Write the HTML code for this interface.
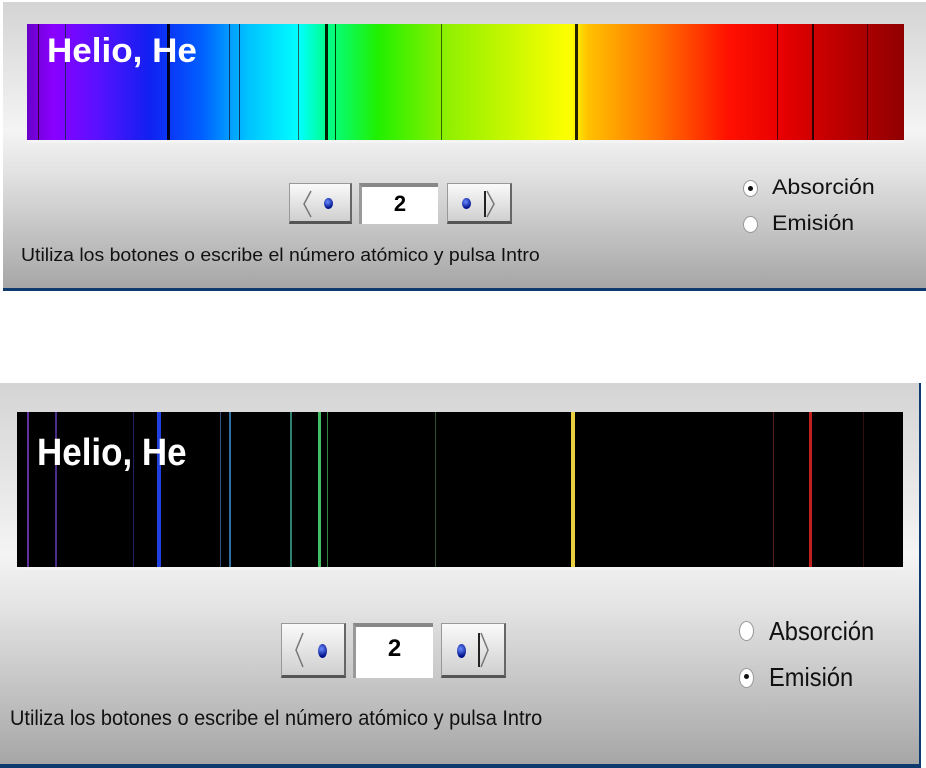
<!DOCTYPE html>
<html><head><meta charset="utf-8"><style>
*{margin:0;padding:0;box-sizing:border-box}
body{width:926px;height:768px;background:#fff;position:relative;overflow:hidden;font-family:"Liberation Sans",sans-serif}
.panel{position:absolute;background:linear-gradient(#d4d4d4 0%,#f4f4f4 45%,#e2e2e2 60%,#a6a6a6 100%)}
.spec{position:absolute;border-bottom:3px solid #f4f4f4}
.ln{position:absolute;top:0;bottom:0}
.title{position:absolute;color:#fff;font-weight:bold;transform-origin:left top;white-space:nowrap}
.btn{position:absolute;background:linear-gradient(#fafafa,#cfcfcf);border:1px solid #999;border-bottom:3px solid #555;border-right:2px solid #666}
.btn svg{position:absolute}
.inp{position:absolute;background:#fff;border-top:4px solid #888;border-left:3px solid #999;text-align:center;font-weight:bold;color:#000}
.dot{position:absolute;width:9px;height:11px;border-radius:50%;background:radial-gradient(circle at 40% 35%,#6a8cff,#00108a 70%)}
.rad{position:absolute;width:15px;height:17px;border-radius:50%;background:#fff;border:1px solid #999}
.rad.on::after{content:"";position:absolute;left:4px;top:5px;width:5px;height:5px;border-radius:50%;background:#111}
.lab{position:absolute;color:#111;transform-origin:left top;white-space:nowrap}
</style></head><body>

<div class="panel" style="left:3px;top:2px;width:923px;height:289px;border-bottom:3px solid #0e3a6e"></div>
<div class="spec" style="left:27px;top:24px;width:877px;height:119px;background:linear-gradient(90deg,#6a00c8 0%,#8a00ff 3%,#5a10ff 8%,#1020f0 14%,#0060ff 20%,#00c0ff 25%,#00ffff 31%,#00ff90 34%,#20f000 40%,#90f000 48%,#ffff00 62%,#ffc000 64%,#ff7000 72%,#ff1000 80%,#e80000 86%,#c00000 92%,#900000 100%)">
<div class="ln" style="left:11px;width:1px;background:#303"></div>
<div class="ln" style="left:38px;width:1px;background:#226"></div>
<div class="ln" style="left:140px;width:3px;background:#002"></div>
<div class="ln" style="left:202px;width:1px;background:#136"></div>
<div class="ln" style="left:212px;width:1px;background:#136"></div>
<div class="ln" style="left:271px;width:1px;background:#266"></div>
<div class="ln" style="left:298px;width:3px;background:#020"></div>
<div class="ln" style="left:308px;width:1px;background:#040"></div>
<div class="ln" style="left:414px;width:1px;background:#360"></div>
<div class="ln" style="left:548px;width:3px;background:#220"></div>
<div class="ln" style="left:750px;width:1px;background:#500"></div>
<div class="ln" style="left:785px;width:2px;background:#300"></div>
<div class="ln" style="left:840px;width:1px;background:#500"></div>
<div class="title" style="left:20px;top:8px;font-size:34px;transform:scaleX(1.03)">Helio, He</div>
</div>
<div class="btn" style="left:289px;top:183px;width:63px;height:41px"><svg style="left:12px;top:6px" width="12" height="28"><path d="M9 1 L2 14 L9 27" fill="none" stroke="#777" stroke-width="1.5"/></svg><div class="dot" style="left:34px;top:14px"></div></div>
<div class="inp" style="left:359px;top:183px;width:79px;height:41px;font-size:22px;line-height:34px">2</div>
<div class="btn" style="left:447px;top:183px;width:65px;height:41px"><div class="dot" style="left:14px;top:14px"></div><svg style="left:36px;top:6px" width="14" height="28"><path d="M1 1 L1 27" stroke="#222" stroke-width="2"/><path d="M3 1 L10 14 L3 27" fill="none" stroke="#777" stroke-width="1.5"/></svg></div>
<div class="rad on" style="left:743px;top:180px"></div>
<div class="rad" style="left:743px;top:216px"></div>
<div class="lab" style="left:772px;top:176px;font-size:21px;transform:scaleX(1.1)">Absorción</div>
<div class="lab" style="left:772px;top:212px;font-size:21px;transform:scaleX(1.1)">Emisión</div>
<div class="lab" style="left:21px;top:245px;font-size:18px;transform:scaleX(1.08)">Utiliza los botones o escribe el número atómico y pulsa Intro</div>

<div class="panel" style="left:0px;top:383px;width:921px;height:385px;border-bottom:4px solid #0e3a6e;border-right:2px solid #0e3a6e"></div>
<div class="spec" style="left:17px;top:412px;width:886px;height:158px;background:#000">
<div class="ln" style="left:10px;width:2px;background:#6030a0"></div>
<div class="ln" style="left:38px;width:2px;background:#4a2a8a"></div>
<div class="ln" style="left:116px;width:1px;background:#202060"></div>
<div class="ln" style="left:140px;width:4px;background:#2040e0"></div>
<div class="ln" style="left:203px;width:1px;background:#305080"></div>
<div class="ln" style="left:212px;width:2px;background:#3070a0"></div>
<div class="ln" style="left:273px;width:2px;background:#308070"></div>
<div class="ln" style="left:301px;width:3px;background:#40c060"></div>
<div class="ln" style="left:310px;width:1px;background:#308040"></div>
<div class="ln" style="left:418px;width:1px;background:#305030"></div>
<div class="ln" style="left:554px;width:4px;background:#e8d040"></div>
<div class="ln" style="left:756px;width:1px;background:#502020"></div>
<div class="ln" style="left:792px;width:3px;background:#c02020"></div>
<div class="ln" style="left:846px;width:1px;background:#301010"></div>
<div class="title" style="left:20px;top:20px;font-size:38px;transform:scaleX(0.92)">Helio, He</div>
</div>
<div class="btn" style="left:281px;top:623px;width:65px;height:55px"><svg style="left:12px;top:8px" width="12" height="36"><path d="M9 1 L2 18 L9 35" fill="none" stroke="#777" stroke-width="1.5"/></svg><div class="dot" style="left:36px;top:20px;height:14px"></div></div>
<div class="inp" style="left:353px;top:623px;width:80px;height:55px;font-size:24px;line-height:44px">2</div>
<div class="btn" style="left:441px;top:623px;width:65px;height:55px"><div class="dot" style="left:15px;top:20px;height:14px"></div><svg style="left:36px;top:8px" width="14" height="36"><path d="M1 1 L1 35" stroke="#222" stroke-width="2"/><path d="M3 1 L10 18 L3 35" fill="none" stroke="#777" stroke-width="1.5"/></svg></div>
<div class="rad" style="left:739px;top:621px;height:20px"></div>
<div class="rad on" style="left:739px;top:668px;height:20px"></div>
<div class="lab" style="left:769px;top:616px;font-size:26px;transform:scaleX(0.91)">Absorción</div>
<div class="lab" style="left:769px;top:662px;font-size:26px;transform:scaleX(0.91)">Emisión</div>
<div class="lab" style="left:10px;top:707px;font-size:21px;transform:scaleX(0.95)">Utiliza los botones o escribe el número atómico y pulsa Intro</div>
</body></html>
